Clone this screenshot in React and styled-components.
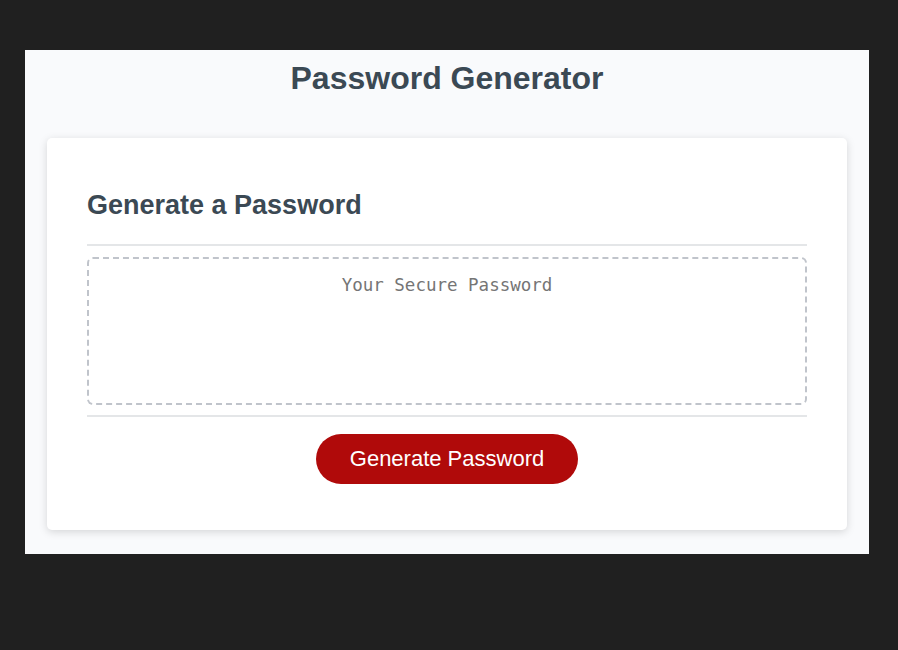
import styled, { createGlobalStyle } from "styled-components";

const GlobalStyle = createGlobalStyle`
  html, body {
    margin: 0;
    background: #202020;
    font-family: "Liberation Sans", Arial, sans-serif;
  }
`;

const Frame = styled.div`
  width: 844px;
  margin: 50px 0 0 25px;
  background: #f9fafc;
  padding: 10px 20px 24px;
  box-sizing: border-box;
`;

const Header = styled.header`
  text-align: center;
  color: #3b4954;
  padding: 0 20px 20px;
`;

const Title = styled.h1`
  font-size: 32px;
  line-height: 37px;
  margin: 0 0 21px;
`;

const Card = styled.div`
  background: #fff;
  border-radius: 5px;
  box-shadow: rgba(0, 0, 0, 0.15) 0 2px 8px 0;
  color: #3b4954;
  font-size: 18px;
  max-width: 800px;
  margin: 0 auto;
  padding: 30px 40px 30px;
  box-sizing: border-box;
`;

const Divider = styled.div`
  height: 2px;
  background: #e4e6e8;
`;

const Heading = styled.h2`
  font-size: 27px;
  line-height: 31px;
  margin: 22px 0 23px;
`;

const Output = styled.textarea`
  appearance: none;
  display: block;
  width: 100%;
  box-sizing: border-box;
  height: 148px;
  padding: 15px 15px 85px;
  margin: 11px 0 10px;
  font-family: "DejaVu Sans Mono", "Liberation Mono", monospace;
  font-size: 17.5px;
  line-height: 22px;
  text-align: center;
  border: 2px dashed #c0c4cb;
  border-radius: 6px;
  resize: none;
  overflow: hidden;
  outline: none;

  &::placeholder {
    color: #757575;
  }
`;

const Footer = styled.div`
  text-align: center;
`;

const Button = styled.button`
  border: none;
  background: #b00a0a;
  border-radius: 25px;
  color: #fff;
  display: inline-block;
  font-family: "Liberation Sans", Arial, sans-serif;
  font-size: 22px;
  line-height: 22px;
  margin: 17px 0 16px;
  padding: 14px 34px;
  cursor: pointer;
`;

export default function App() {
  return (
    <>
      <GlobalStyle />
      <Frame>
        <Header>
          <Title>Password Generator</Title>
        </Header>
        <Card>
          <Heading>Generate a Password</Heading>
          <Divider />
          <Output readOnly placeholder="Your Secure Password" />
          <Divider />
          <Footer>
            <Button>Generate Password</Button>
          </Footer>
        </Card>
      </Frame>
    </>
  );
}
